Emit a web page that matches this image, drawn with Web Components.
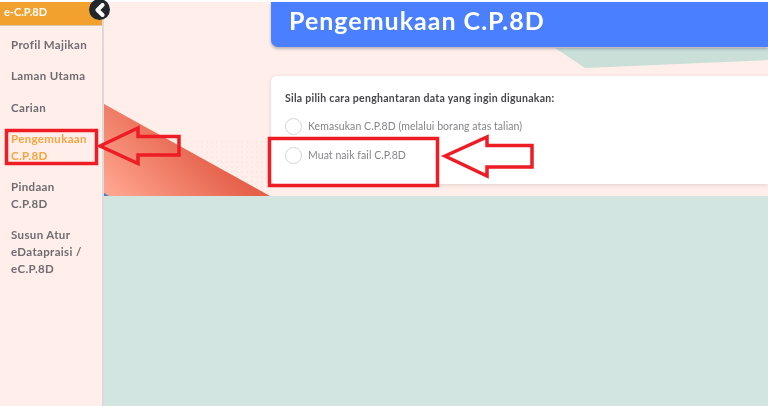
<!DOCTYPE html>
<html lang="ms">
<head>
<meta charset="utf-8">
<title>Pengemukaan C.P.8D</title>
<style>
  html, body { margin: 0; height: 100%; overflow: hidden; }
  body { font-family: "Lato", "Liberation Sans", sans-serif; }
</style>
</head>
<body>
<app-shell>
  <app-sidebar slot="sidebar" brand="e-C.P.8D">
    <nav-item>Profil Majikan</nav-item>
    <nav-item>Laman Utama</nav-item>
    <nav-item>Carian</nav-item>
    <nav-item active>Pengemukaan<br>C.P.8D</nav-item>
    <nav-item>Pindaan<br>C.P.8D</nav-item>
    <nav-item>Susun Atur<br>eDatapraisi /<br>eC.P.8D</nav-item>
  </app-sidebar>
  <page-banner>Pengemukaan C.P.8D</page-banner>
  <option-card heading="Sila pilih cara penghantaran data yang ingin digunakan:">
    <radio-option>Kemasukan C.P.8D (melalui borang atas talian)</radio-option>
    <radio-option>Muat naik fail C.P.8D</radio-option>
  </option-card>
</app-shell>

<script>
class AppShell extends HTMLElement {
  constructor() {
    super();
    this.attachShadow({ mode: "open" });
    this.shadowRoot.innerHTML = `
      <style>
        :host { display: flex; width: 768px; height: 406px; background: #fff; overflow: hidden; position: relative; filter: blur(.3px); }
        .main { flex: 1; display: flex; flex-direction: column; min-width: 0; margin-top: 2px; }
        .hero {
          position: relative; height: 194px; background: #ffeeea;
          padding-left: 167px; box-sizing: border-box;
        }
        .teal { flex: 1; background: #d2e5e0; }
        .deco { position: absolute; left: 0; top: 0; width: 664px; height: 194px; }
        .content { position: relative; display: flex; flex-direction: column; gap: 29px; }
        .marks { position: absolute; left: 0; top: 0; width: 768px; height: 406px; pointer-events: none; z-index: 2; }
      </style>
      <slot name="sidebar"></slot>
      <div class="main">
        <div class="hero">
          <svg class="deco" viewBox="104 2 664 194">
            <defs>
              <linearGradient id="tri" x1="115" y1="196" x2="215" y2="96" gradientUnits="userSpaceOnUse">
                <stop offset="0" stop-color="#ffa48e"/>
                <stop offset=".7" stop-color="#e5614a"/>
              </linearGradient>
              <pattern id="dots" x="0" y="0" width="5" height="5" patternUnits="userSpaceOnUse">
                <circle cx="2" cy="2" r="0.7" fill="#e7634c" fill-opacity=".13"/>
              </pattern>
            </defs>
            <polygon points="190,140 271,140 271,196 190,196" fill="url(#dots)"/>
            <polygon points="104,104 270,196 104,196" fill="url(#tri)"/>
            <polygon points="104,193 109,196 104,196" fill="#3f7fd0"/>
            <polygon points="555,48 585,68 768,60 768,48" fill="#c9dfd8"/>
          </svg>
          <div class="content"><slot></slot></div>
        </div>
        <div class="teal"></div>
      </div>
      <svg class="marks" viewBox="0 0 768 406" fill="none" stroke="#ee1c25" stroke-width="3.500">
        <rect x="6.500" y="130.500" width="90" height="33"/>
        <rect x="269.500" y="138.500" width="168" height="47"/>
        <polygon points="100,146 138,128 138,136.500 179,136.500 179,155 138,155 138,163.500"/>
        <polygon points="445,156 487,137 487,145.500 532,145.500 532,167 487,167 487,176"/>
      </svg>
    `;
  }
}

class AppSidebar extends HTMLElement {
  constructor() {
    super();
    this.attachShadow({ mode: "open" });
    this.shadowRoot.innerHTML = `
      <style>
        :host {
          display: flex; flex-direction: column; flex: none; box-sizing: border-box;
          width: 104px; margin-top: 2px; background: #ffeeea;
          border-right: 2px solid #dcdad8; position: relative; z-index: 1;
        }
        .brand {
          height: 24px; background: #f2a02e; color: #fff;
          font-size: 11px; font-weight: 700; line-height: 20px; padding-left: 4px;
          border-bottom: 1px solid #d9c9a9; box-sizing: border-box;
        }
        nav { display: flex; flex-direction: column; gap: 14.300px; padding: 10px 0 0 11px; }
        .toggle {
          position: absolute; left: 89px; top: -3px; width: 21px; height: 21px;
          border-radius: 50%; background: #23262b;
          display: flex; align-items: center; justify-content: center;
        }
        .toggle svg { width: 12px; height: 14px; }
      </style>
      <div class="brand"></div>
      <nav><slot></slot></nav>
      <div class="toggle">
        <svg viewBox="0 0 12 14"><path d="M8.500 2 3.500 7l5 5" fill="none" stroke="#fff" stroke-width="4" stroke-linecap="round" stroke-linejoin="round"/></svg>
      </div>
    `;
  }
  connectedCallback() {
    this.shadowRoot.querySelector(".brand").textContent = this.getAttribute("brand") ?? "";
  }
}

class NavItem extends HTMLElement {
  constructor() {
    super();
    this.attachShadow({ mode: "open" });
    this.shadowRoot.innerHTML = `
      <style>
        :host {
          display: block; font-size: 11.500px; font-weight: 700; line-height: 17px;
          letter-spacing: .35px; color: #6d6d72;
        }
        :host([active]) { color: #f5a53f; }
      </style>
      <slot></slot>
    `;
  }
}

class PageBanner extends HTMLElement {
  constructor() {
    super();
    this.attachShadow({ mode: "open" });
    this.shadowRoot.innerHTML = `
      <style>
        :host {
          display: block; height: 45px; box-sizing: border-box; padding-left: 18px;
          background: #4a80ff; color: #fff; border-radius: 0 0 0 7px;
          font-size: 25px; font-weight: 700; line-height: 37px; letter-spacing: 1px;
          box-shadow: 0 2px 3px rgba(60, 70, 90, .35);
        }
      </style>
      <slot></slot>
    `;
  }
}

class OptionCard extends HTMLElement {
  constructor() {
    super();
    this.attachShadow({ mode: "open" });
    this.shadowRoot.innerHTML = `
      <style>
        :host {
          display: block; height: 108px; box-sizing: border-box; padding: 15px 0 0 14px;
          background: #fff; border-radius: 6px 0 0 6px;
          box-shadow: 0 1px 4px rgba(90, 90, 90, .2);
        }
        h2 {
          margin: 0 0 12px; font-size: 10.500px; font-weight: 700; line-height: 14px;
          letter-spacing: .28px; color: #47474b;
        }
        .opts { display: flex; flex-direction: column; gap: 11px; }
      </style>
      <h2></h2>
      <div class="opts"><slot></slot></div>
    `;
  }
  connectedCallback() {
    this.shadowRoot.querySelector("h2").textContent = this.getAttribute("heading") ?? "";
  }
}

class RadioOption extends HTMLElement {
  constructor() {
    super();
    this.attachShadow({ mode: "open" });
    this.shadowRoot.innerHTML = `
      <style>
        :host {
          display: flex; align-items: center; gap: 6px; height: 18px;
          font-size: 10.500px; letter-spacing: .06px; color: #85858a;
        }
        .dot {
          width: 15px; height: 15px; flex: none; border-radius: 50%;
          border: 1px solid #d4d4d6; background: #fff;
        }
      </style>
      <span class="dot"></span>
      <slot></slot>
    `;
  }
}

customElements.define("app-shell", AppShell);
customElements.define("app-sidebar", AppSidebar);
customElements.define("nav-item", NavItem);
customElements.define("page-banner", PageBanner);
customElements.define("option-card", OptionCard);
customElements.define("radio-option", RadioOption);
</script>
</body>
</html>
